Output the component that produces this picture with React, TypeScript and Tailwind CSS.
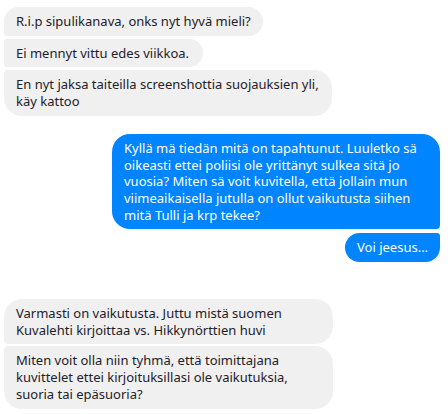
const font = { fontFamily: '"Segoe UI", "Noto Sans", sans-serif' }

function Gray({ lines, className }: { lines: string[]; className: string }) {
  return (
    <div className={`bg-[#f1f0f0] text-[#1d2129] px-3 py-[6px] text-[13px] leading-[16.7px] ${className}`}>
      {lines.map((l, i) => (
        <div key={i} className="whitespace-nowrap">{l}</div>
      ))}
    </div>
  )
}

function Blue({ lines, className }: { lines: string[]; className: string }) {
  return (
    <div className={`bg-[#0084ff] text-white px-3 py-[6px] text-[13px] leading-[16.7px] ${className}`}>
      {lines.map((l, i) => (
        <div key={i} className="whitespace-nowrap">{l}</div>
      ))}
    </div>
  )
}

export default function App() {
  return (
    <div className="w-[448px] h-[414px] bg-white overflow-hidden pt-[7px] pl-[4px] pr-[8px]" style={font}>
      <div className="flex flex-col items-start gap-[3px]">
        <Gray className="w-[259px] rounded-tl-[18px] rounded-r-[18px] rounded-bl-[4px]" lines={["R.i.p sipulikanava, onks nyt hyvä mieli?"]} />
        <Gray className="w-[199px] rounded-l-[4px] rounded-r-[18px]" lines={["Ei mennyt vittu edes viikkoa."]} />
        <Gray
          className="w-[328px] rounded-tl-[4px] rounded-r-[18px] rounded-bl-[18px]"
          lines={["En nyt jaksa taiteilla screenshottia suojauksien yli,", "käy kattoo"]}
        />
      </div>

      <div className="flex flex-col items-end gap-[4px] mt-[18px]">
        <Blue
          className="w-[328px] rounded-l-[18px] rounded-tr-[18px] rounded-br-[4px]"
          lines={[
            "Kyllä mä tiedän mitä on tapahtunut. Luuletko sä",
            "oikeasti ettei poliisi ole yrittänyt sulkea sitä jo",
            "vuosia? Miten sä voit kuvitella, että jollain mun",
            "viimeaikaisella jutulla on ollut vaikutusta siihen",
            "mitä Tulli ja krp tekee?",
          ]}
        />
        <Blue className="w-[95px] rounded-l-[18px] rounded-tr-[4px] rounded-br-[18px]" lines={["Voi jeesus..."]} />
      </div>

      <div className="flex flex-col items-start gap-[2px] mt-[37px]">
        <Gray
          className="w-[329px] rounded-tl-[18px] rounded-r-[18px] rounded-bl-[4px]"
          lines={["Varmasti on vaikutusta. Juttu mistä suomen", "Kuvalehti kirjoittaa vs. Hikkynörttien huvi"]}
        />
        <Gray
          className="w-[329px] rounded-tl-[4px] rounded-r-[18px] rounded-bl-[18px]"
          lines={[
            "Miten voit olla niin tyhmä, että toimittajana",
            "kuvittelet ettei kirjoituksillasi ole vaikutuksia,",
            "suoria tai epäsuoria?",
          ]}
        />
      </div>
    </div>
  )
}
